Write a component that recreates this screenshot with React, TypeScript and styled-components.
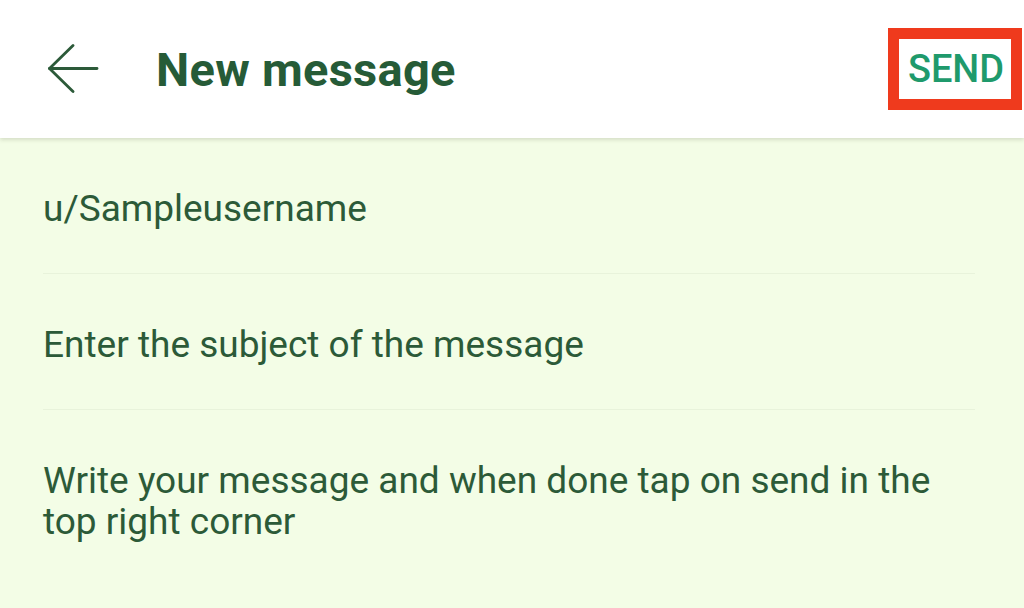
import React from "react";
import styled, { createGlobalStyle } from "styled-components";

const GlobalStyle = createGlobalStyle`
  html, body {
    margin: 0;
    padding: 0;
    background: #f3fde6;
    font-family: Roboto, "Liberation Sans", sans-serif;
  }
`;

const Screen = styled.div`
  width: 1024px;
  height: 608px;
  overflow: hidden;
  background: #f3fde6;
`;

const Header = styled.header`
  position: relative;
  z-index: 1;
  height: 138px;
  display: flex;
  align-items: center;
  padding-left: 47px;
  background: #ffffff;
  box-shadow: 0 2px 4px rgba(60, 60, 40, 0.16);
`;

const BackButton = styled.button`
  display: flex;
  padding: 0;
  border: none;
  background: none;
  color: #2c5a39;
`;

const Title = styled.h1`
  margin: 0 0 0 57px;
  font-size: 47px;
  font-weight: 700;
  color: #265b37;
  letter-spacing: 0.3px;
`;

const SendButton = styled.button`
  margin-left: auto;
  margin-right: 2px;
  width: 134px;
  height: 82px;
  box-sizing: border-box;
  border: 11px solid #ef3a1d;
  background: #ffffff;
  color: #1f9a6c;
  font-family: Roboto, "Liberation Sans", sans-serif;
  font-size: 38px;
  font-weight: 500;
  padding: 0 0 0 2px;
`;

const Form = styled.main`
  display: flex;
  flex-direction: column;
`;

const Field = styled.div<{ $last?: boolean }>`
  margin: 0 49px 0 43px;
  padding: 50px 0 44px;
  border-bottom: 1px solid ${(p) => (p.$last ? "transparent" : "#e8f3db")};
  font-size: 37px;
  line-height: 41px;
  color: #2c5a38;
`;

export default function App() {
  return (
    <Screen>
      <GlobalStyle />
      <Header>
        <BackButton aria-label="Back">
          <svg width="52" height="50" viewBox="0 0 52 50" fill="none" stroke="currentColor" strokeWidth="2.8" strokeLinecap="round" strokeLinejoin="round">
            <path d="M2.5 24.5H50" />
            <path d="M26 1.5L2.5 24.5L26 47.5" />
          </svg>
        </BackButton>
        <Title>New message</Title>
        <SendButton>SEND</SendButton>
      </Header>
      <Form>
        <Field>u/Sampleusername</Field>
        <Field>Enter the subject of the message</Field>
        <Field $last>Write your message and when done tap on send in the top right corner</Field>
      </Form>
    </Screen>
  );
}
